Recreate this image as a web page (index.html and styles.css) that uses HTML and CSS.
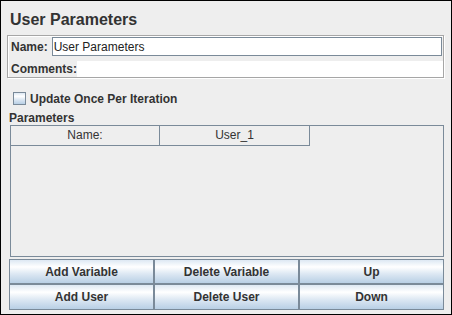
FILE: index.html
```html
<!DOCTYPE html>
<html lang="en">
<head>
  <meta charset="UTF-8" />
  <title>User Parameters</title>
  <link rel="stylesheet" href="styles.css">
</head>
<body>
  <div class="frame">
    <h1 class="title">User Parameters</h1>

    <!-- name / comments -->
    <div class="name-panel">
      <div class="row">
        <label class="lbl">Name:</label>
        <input class="field" type="text" value="User Parameters" />
      </div>
      <div class="row comments-row">
        <label class="lbl">Comments:</label>
        <div class="comments"></div>
      </div>
    </div>

    <label class="check"><span class="box"></span>Update Once Per Iteration</label>

    <div class="section">Parameters</div>

    <!-- parameter table -->
    <div class="table">
      <div class="thead">
        <div class="th th-first">Name:</div>
        <div class="th">User_1</div>
      </div>
      <div class="tbody"></div>
    </div>

    <div class="buttons">
      <button class="btn">Add Variable</button>
      <button class="btn">Delete Variable</button>
      <button class="btn">Up</button>
      <button class="btn">Add User</button>
      <button class="btn">Delete User</button>
      <button class="btn">Down</button>
    </div>
  </div>
</body>
</html>
```

FILE: styles.css
```css
* {
  box-sizing: border-box;
}
body {
  margin: 0;
  font-family: "Liberation Sans", Arial, sans-serif;
  font-size: 12px;
  color: #333;
}
.frame {
  width: 452px;
  height: 315px;
  border: 1px solid #000;
  background: #eeeeee;
  padding: 0 6px;
}
.title {
  margin: 0 0 0 3px;
  height: 34px;
  padding-top: 10px;
  font-size: 16px;
  line-height: 18px;
  font-weight: bold;
  color: #333;
}
.name-panel {
  margin-right: 1px;
  height: 43px;
  border: 1px solid #a6a6a6;
  box-shadow: inset 1px 1px 0 #fff, 1px 1px 0 #fff;
  padding: 1px 0 0 3px;
}
.row {
  display: flex;
  align-items: center;
}
.lbl {
  font-weight: bold;
  white-space: nowrap;
}
.field {
  flex: 1;
  height: 19px;
  margin: 0 1px 0 4px;
  padding: 0 1px;
  border: 1px solid #7a8a99;
  background: #fff;
  font-family: inherit;
  font-size: 12px;
  color: #222;
  outline: none;
}
.comments-row {
  margin-top: 5px;
}
.comments {
  flex: 1;
  height: 16px;
  background: #fff;
}
.check {
  display: flex;
  align-items: center;
  height: 15px;
  margin-top: 13px;
  padding-left: 6px;
  font-weight: bold;
}
.box {
  width: 13px;
  height: 13px;
  margin-right: 4px;
  border: 1px solid #7a8a99;
  background: linear-gradient(to bottom, #dde8f3 0%, #fff 30%, #dde8f3 60%, #b8cfe5 100%);
}
.section {
  height: 19px;
  padding-top: 5px;
  margin-left: 2px;
  line-height: 14px;
  font-weight: bold;
}
.table {
  height: 132px;
  margin: 0 1px 0 3px;
  border: 1px solid #7a8a99;
  display: flex;
  flex-direction: column;
}
.thead {
  display: flex;
  height: 20px;
}
.th {
  width: 150px;
  height: 20px;
  border-right: 1px solid #7a8a99;
  border-bottom: 1px solid #7a8a99;
  text-align: center;
  line-height: 19px;
}
.th-first {
  width: 149px;
}
.tbody {
  flex: 1;
}
.buttons {
  margin: 2px 1px 0 2px;
  display: grid;
  grid-template-columns: repeat(3, 1fr);
  grid-template-rows: 25px 26px;
}
.btn {
  margin: 0;
  padding: 0;
  border: 1px solid #7a8a99;
  background: linear-gradient(to bottom, #dde8f3 0%, #fff 30%, #dde8f3 60%, #b8cfe5 100%);
  font-family: inherit;
  font-size: 12px;
  font-weight: bold;
  color: #333;
}
```
